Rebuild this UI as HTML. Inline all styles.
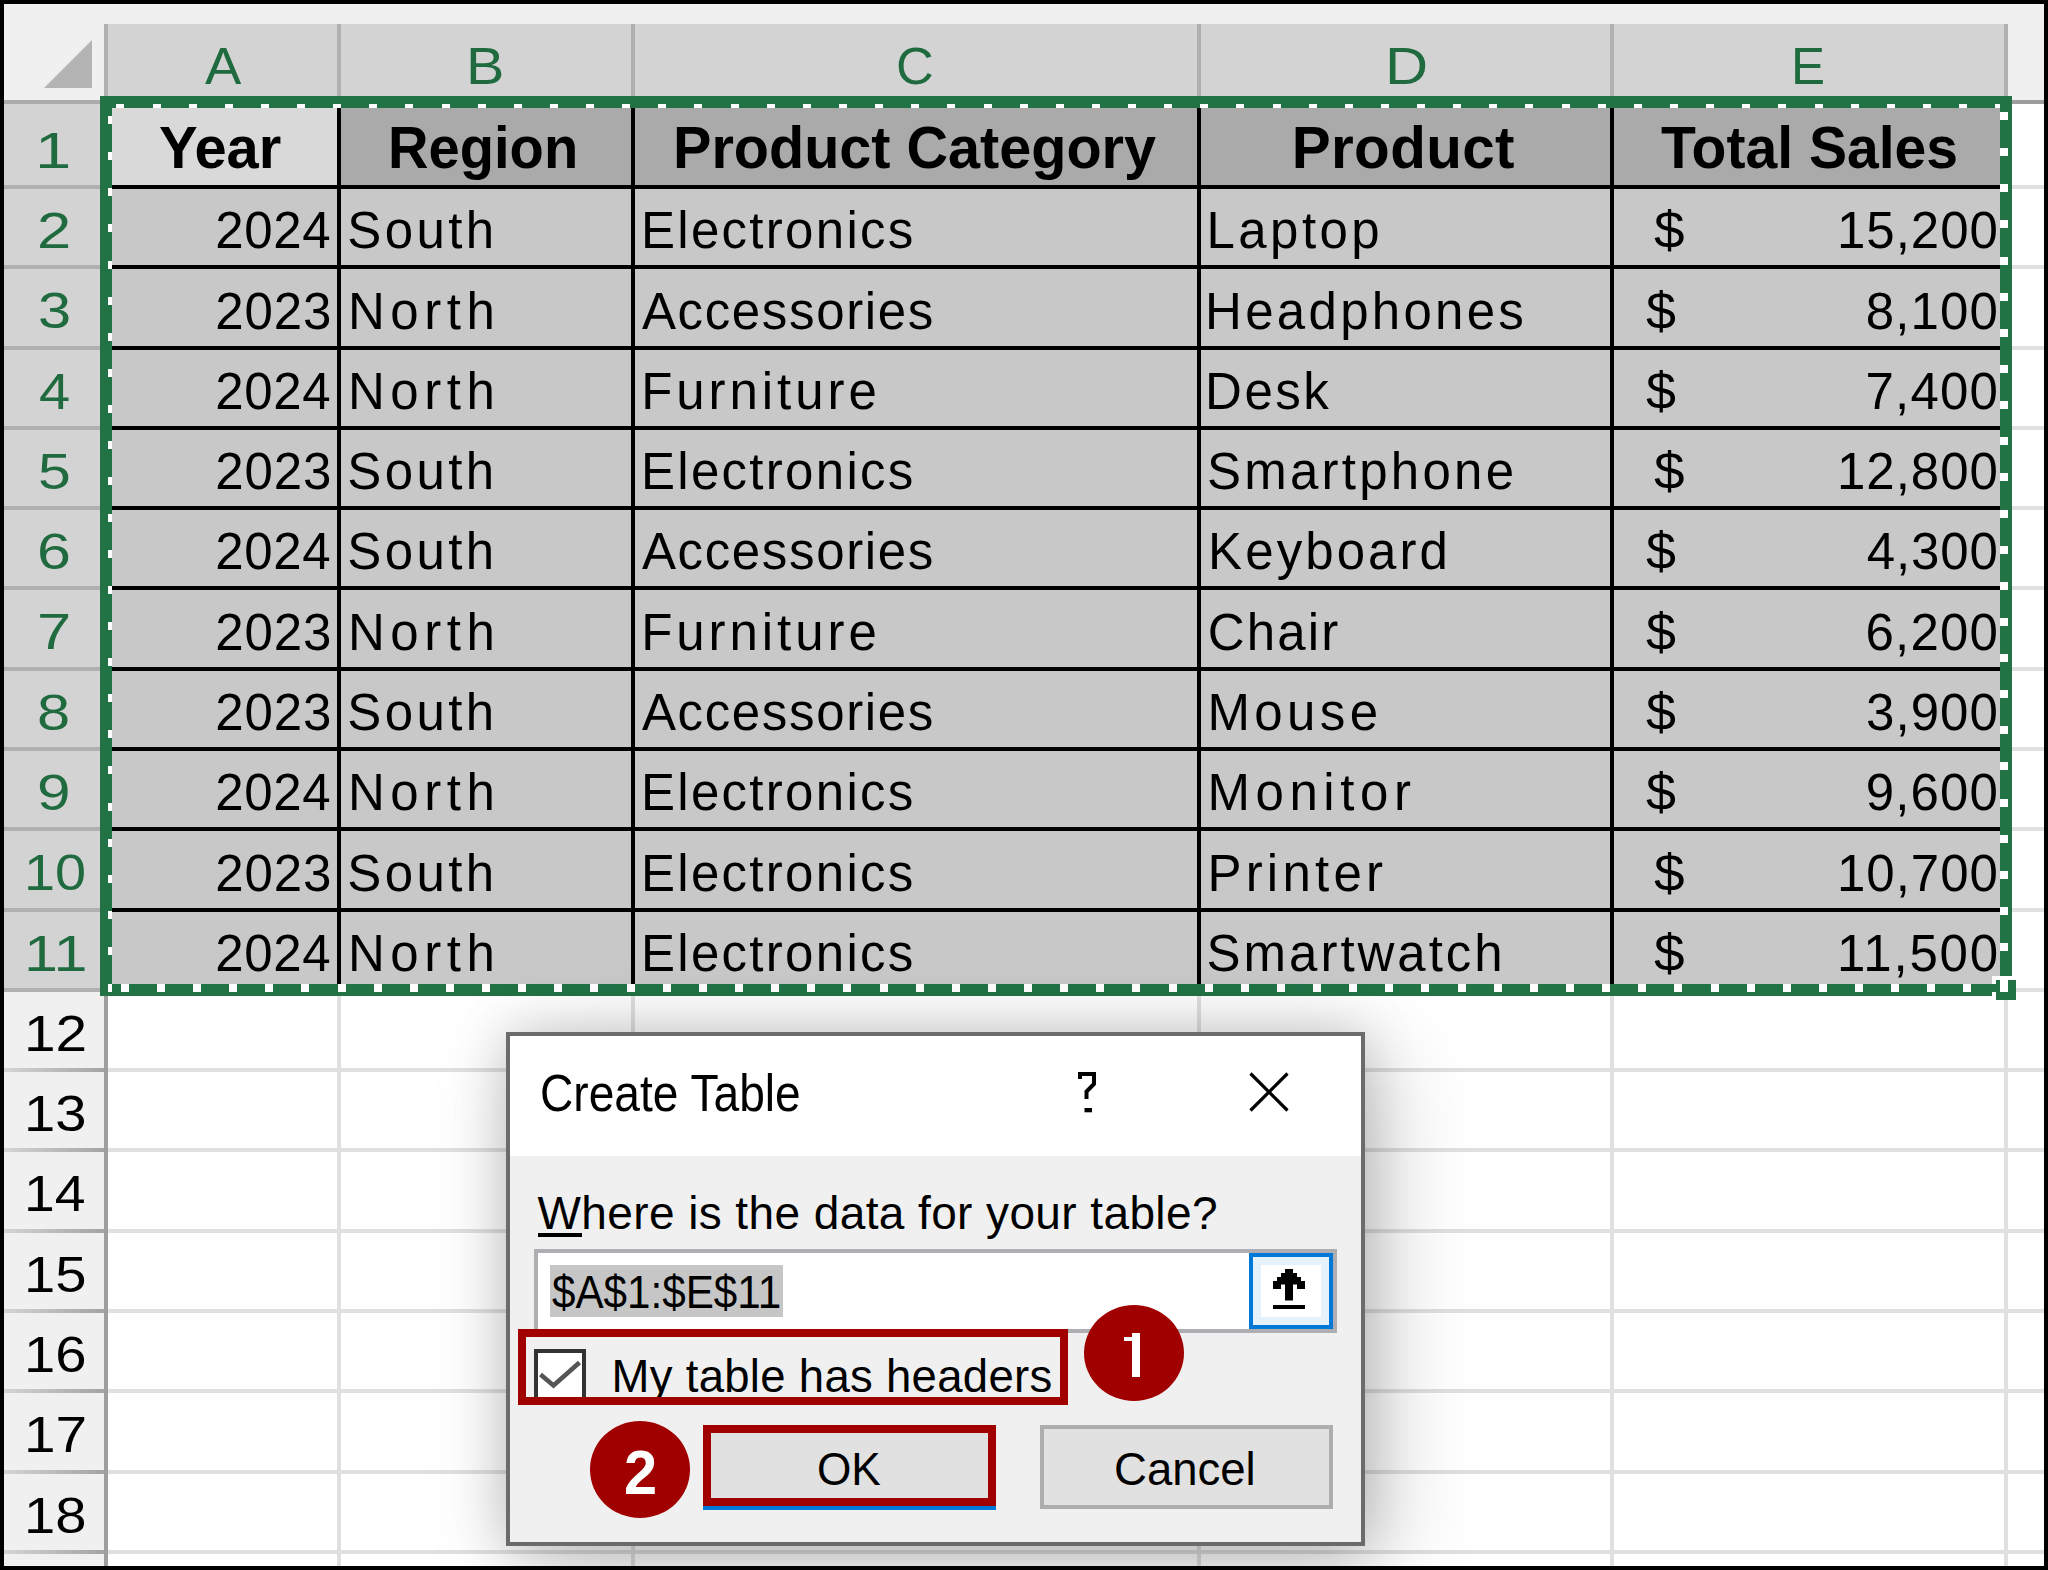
<!DOCTYPE html>
<html><head><meta charset="utf-8"><title>Create Table</title>
<style>
html,body{margin:0;padding:0;width:2048px;height:1570px;overflow:hidden;background:#000}
body>div,body>svg{position:absolute;box-sizing:border-box}
.t{white-space:pre;font-family:"Liberation Sans",sans-serif;transform-origin:0 0}
</style></head><body>
<div style="left:0.00px;top:0.00px;width:2048.00px;height:1570.00px;background:#000;"></div>
<div style="left:4.00px;top:4.00px;width:2040.00px;height:1562.00px;background:#ffffff;"></div>
<div style="left:4.00px;top:4.00px;width:2040.00px;height:96.00px;background:#f0f0f0;"></div>
<div style="left:104.00px;top:24.00px;width:1900.00px;height:76.00px;background:#d3d3d3;"></div>
<svg style="left:44px;top:40px;width:48px;height:48px" width="48" height="48"><polygon points="48,0 48,48 0,48" fill="#b4b4b4"/></svg>
<div style="left:104.00px;top:24.00px;width:4.00px;height:76.00px;background:#b0b0b0;"></div>
<div style="left:337.00px;top:24.00px;width:4.00px;height:76.00px;background:#b0b0b0;"></div>
<div style="left:630.50px;top:24.00px;width:4.00px;height:76.00px;background:#b0b0b0;"></div>
<div style="left:1197.00px;top:24.00px;width:4.00px;height:76.00px;background:#b0b0b0;"></div>
<div style="left:1610.00px;top:24.00px;width:4.00px;height:76.00px;background:#b0b0b0;"></div>
<div style="left:2004.00px;top:24.00px;width:4.00px;height:76.00px;background:#b0b0b0;"></div>
<div style="left:4.00px;top:100.00px;width:2040.00px;height:4.00px;background:#ababab;"></div>
<div style="left:2012.00px;top:100.00px;width:32.00px;height:4.00px;background:#9c9c9c;"></div>
<div style="left:4.00px;top:104.00px;width:100.00px;height:887.90px;background:#d3d3d3;"></div>
<div style="left:4.00px;top:991.90px;width:100.00px;height:574.10px;background:#f0f0f0;"></div>
<div style="left:104.00px;top:987.90px;width:4.00px;height:578.10px;background:#9e9e9e;"></div>
<div style="left:4.00px;top:185.00px;width:100.00px;height:4.00px;background:#b0b0b0;"></div>
<div style="left:4.00px;top:265.29px;width:100.00px;height:4.00px;background:#b0b0b0;"></div>
<div style="left:4.00px;top:345.58px;width:100.00px;height:4.00px;background:#b0b0b0;"></div>
<div style="left:4.00px;top:425.87px;width:100.00px;height:4.00px;background:#b0b0b0;"></div>
<div style="left:4.00px;top:506.16px;width:100.00px;height:4.00px;background:#b0b0b0;"></div>
<div style="left:4.00px;top:586.45px;width:100.00px;height:4.00px;background:#b0b0b0;"></div>
<div style="left:4.00px;top:666.74px;width:100.00px;height:4.00px;background:#b0b0b0;"></div>
<div style="left:4.00px;top:747.03px;width:100.00px;height:4.00px;background:#b0b0b0;"></div>
<div style="left:4.00px;top:827.32px;width:100.00px;height:4.00px;background:#b0b0b0;"></div>
<div style="left:4.00px;top:907.61px;width:100.00px;height:4.00px;background:#b0b0b0;"></div>
<div style="left:4.00px;top:987.90px;width:100.00px;height:4.00px;background:#b0b0b0;"></div>
<div style="left:4.00px;top:1068.19px;width:100.00px;height:4.00px;background:linear-gradient(90deg,#d4d4d4,#a4a4a4);"></div>
<div style="left:4.00px;top:1148.48px;width:100.00px;height:4.00px;background:linear-gradient(90deg,#d4d4d4,#a4a4a4);"></div>
<div style="left:4.00px;top:1228.77px;width:100.00px;height:4.00px;background:linear-gradient(90deg,#d4d4d4,#a4a4a4);"></div>
<div style="left:4.00px;top:1309.06px;width:100.00px;height:4.00px;background:linear-gradient(90deg,#d4d4d4,#a4a4a4);"></div>
<div style="left:4.00px;top:1389.35px;width:100.00px;height:4.00px;background:linear-gradient(90deg,#d4d4d4,#a4a4a4);"></div>
<div style="left:4.00px;top:1469.64px;width:100.00px;height:4.00px;background:linear-gradient(90deg,#d4d4d4,#a4a4a4);"></div>
<div style="left:4.00px;top:1549.93px;width:100.00px;height:4.00px;background:linear-gradient(90deg,#d4d4d4,#a4a4a4);"></div>
<div style="left:337.00px;top:104.00px;width:4.00px;height:1462.00px;background:#e0e0e0;"></div>
<div style="left:630.50px;top:104.00px;width:4.00px;height:1462.00px;background:#e0e0e0;"></div>
<div style="left:1197.00px;top:104.00px;width:4.00px;height:1462.00px;background:#e0e0e0;"></div>
<div style="left:1610.00px;top:104.00px;width:4.00px;height:1462.00px;background:#e0e0e0;"></div>
<div style="left:2004.00px;top:104.00px;width:4.00px;height:1462.00px;background:#e0e0e0;"></div>
<div style="left:108.00px;top:185.00px;width:1936.00px;height:4.00px;background:#e0e0e0;"></div>
<div style="left:108.00px;top:265.29px;width:1936.00px;height:4.00px;background:#e0e0e0;"></div>
<div style="left:108.00px;top:345.58px;width:1936.00px;height:4.00px;background:#e0e0e0;"></div>
<div style="left:108.00px;top:425.87px;width:1936.00px;height:4.00px;background:#e0e0e0;"></div>
<div style="left:108.00px;top:506.16px;width:1936.00px;height:4.00px;background:#e0e0e0;"></div>
<div style="left:108.00px;top:586.45px;width:1936.00px;height:4.00px;background:#e0e0e0;"></div>
<div style="left:108.00px;top:666.74px;width:1936.00px;height:4.00px;background:#e0e0e0;"></div>
<div style="left:108.00px;top:747.03px;width:1936.00px;height:4.00px;background:#e0e0e0;"></div>
<div style="left:108.00px;top:827.32px;width:1936.00px;height:4.00px;background:#e0e0e0;"></div>
<div style="left:108.00px;top:907.61px;width:1936.00px;height:4.00px;background:#e0e0e0;"></div>
<div style="left:108.00px;top:987.90px;width:1936.00px;height:4.00px;background:#e0e0e0;"></div>
<div style="left:108.00px;top:1068.19px;width:1936.00px;height:4.00px;background:#e0e0e0;"></div>
<div style="left:108.00px;top:1148.48px;width:1936.00px;height:4.00px;background:#e0e0e0;"></div>
<div style="left:108.00px;top:1228.77px;width:1936.00px;height:4.00px;background:#e0e0e0;"></div>
<div style="left:108.00px;top:1309.06px;width:1936.00px;height:4.00px;background:#e0e0e0;"></div>
<div style="left:108.00px;top:1389.35px;width:1936.00px;height:4.00px;background:#e0e0e0;"></div>
<div style="left:108.00px;top:1469.64px;width:1936.00px;height:4.00px;background:#e0e0e0;"></div>
<div style="left:108.00px;top:1549.93px;width:1936.00px;height:4.00px;background:#e0e0e0;"></div>
<div style="left:108.00px;top:104.00px;width:1896.00px;height:883.90px;background:#c8c8c8;"></div>
<div style="left:108.00px;top:104.00px;width:229.00px;height:81.00px;background:#d9d9d9;"></div>
<div style="left:341.00px;top:104.00px;width:1663.00px;height:81.00px;background:#aaaaaa;"></div>
<div style="left:337.00px;top:104.00px;width:4.00px;height:883.90px;background:#000;"></div>
<div style="left:630.50px;top:104.00px;width:4.00px;height:883.90px;background:#000;"></div>
<div style="left:1197.00px;top:104.00px;width:4.00px;height:883.90px;background:#000;"></div>
<div style="left:1610.00px;top:104.00px;width:4.00px;height:883.90px;background:#000;"></div>
<div style="left:108.00px;top:185.00px;width:1896.00px;height:4.00px;background:#000;"></div>
<div style="left:108.00px;top:265.29px;width:1896.00px;height:4.00px;background:#000;"></div>
<div style="left:108.00px;top:345.58px;width:1896.00px;height:4.00px;background:#000;"></div>
<div style="left:108.00px;top:425.87px;width:1896.00px;height:4.00px;background:#000;"></div>
<div style="left:108.00px;top:506.16px;width:1896.00px;height:4.00px;background:#000;"></div>
<div style="left:108.00px;top:586.45px;width:1896.00px;height:4.00px;background:#000;"></div>
<div style="left:108.00px;top:666.74px;width:1896.00px;height:4.00px;background:#000;"></div>
<div style="left:108.00px;top:747.03px;width:1896.00px;height:4.00px;background:#000;"></div>
<div style="left:108.00px;top:827.32px;width:1896.00px;height:4.00px;background:#000;"></div>
<div style="left:108.00px;top:907.61px;width:1896.00px;height:4.00px;background:#000;"></div>
<div style="left:100.00px;top:96.00px;width:1912.00px;height:12.00px;background:#217346;"></div>
<div style="left:100.00px;top:96.00px;width:12.00px;height:900.00px;background:#217346;"></div>
<div style="left:2000.00px;top:96.00px;width:12.00px;height:880.00px;background:#217346;"></div>
<div style="left:100.00px;top:984.00px;width:1892.00px;height:12.00px;background:#217346;"></div>
<div style="left:1992.00px;top:984.00px;width:4.00px;height:8.00px;background:#217346;"></div>
<div style="left:1992.00px;top:976.00px;width:8.00px;height:8.00px;background:#ffffff;"></div>
<div style="left:2000.00px;top:976.00px;width:12.00px;height:4.00px;background:#ffffff;"></div>
<div style="left:1996.00px;top:980.00px;width:20.00px;height:20.00px;background:#217346;"></div>
<div style="left:2000.00px;top:980.00px;width:8.00px;height:12.00px;background:#ffffff;"></div>
<div style="left:116.40px;top:104.00px;width:8.00px;height:4.00px;background:#ffffff;"></div>
<div style="left:152.53px;top:104.00px;width:8.00px;height:4.00px;background:#ffffff;"></div>
<div style="left:188.66px;top:104.00px;width:8.00px;height:4.00px;background:#ffffff;"></div>
<div style="left:224.79px;top:104.00px;width:8.00px;height:4.00px;background:#ffffff;"></div>
<div style="left:260.92px;top:104.00px;width:8.00px;height:4.00px;background:#ffffff;"></div>
<div style="left:297.05px;top:104.00px;width:8.00px;height:4.00px;background:#ffffff;"></div>
<div style="left:333.18px;top:104.00px;width:8.00px;height:4.00px;background:#ffffff;"></div>
<div style="left:369.31px;top:104.00px;width:8.00px;height:4.00px;background:#ffffff;"></div>
<div style="left:405.44px;top:104.00px;width:8.00px;height:4.00px;background:#ffffff;"></div>
<div style="left:441.57px;top:104.00px;width:8.00px;height:4.00px;background:#ffffff;"></div>
<div style="left:477.70px;top:104.00px;width:8.00px;height:4.00px;background:#ffffff;"></div>
<div style="left:513.83px;top:104.00px;width:8.00px;height:4.00px;background:#ffffff;"></div>
<div style="left:549.96px;top:104.00px;width:8.00px;height:4.00px;background:#ffffff;"></div>
<div style="left:586.09px;top:104.00px;width:8.00px;height:4.00px;background:#ffffff;"></div>
<div style="left:622.22px;top:104.00px;width:8.00px;height:4.00px;background:#ffffff;"></div>
<div style="left:658.35px;top:104.00px;width:8.00px;height:4.00px;background:#ffffff;"></div>
<div style="left:694.48px;top:104.00px;width:8.00px;height:4.00px;background:#ffffff;"></div>
<div style="left:730.61px;top:104.00px;width:8.00px;height:4.00px;background:#ffffff;"></div>
<div style="left:766.74px;top:104.00px;width:8.00px;height:4.00px;background:#ffffff;"></div>
<div style="left:802.87px;top:104.00px;width:8.00px;height:4.00px;background:#ffffff;"></div>
<div style="left:839.00px;top:104.00px;width:8.00px;height:4.00px;background:#ffffff;"></div>
<div style="left:875.13px;top:104.00px;width:8.00px;height:4.00px;background:#ffffff;"></div>
<div style="left:911.26px;top:104.00px;width:8.00px;height:4.00px;background:#ffffff;"></div>
<div style="left:947.39px;top:104.00px;width:8.00px;height:4.00px;background:#ffffff;"></div>
<div style="left:983.52px;top:104.00px;width:8.00px;height:4.00px;background:#ffffff;"></div>
<div style="left:1019.65px;top:104.00px;width:8.00px;height:4.00px;background:#ffffff;"></div>
<div style="left:1055.78px;top:104.00px;width:8.00px;height:4.00px;background:#ffffff;"></div>
<div style="left:1091.91px;top:104.00px;width:8.00px;height:4.00px;background:#ffffff;"></div>
<div style="left:1128.04px;top:104.00px;width:8.00px;height:4.00px;background:#ffffff;"></div>
<div style="left:1164.17px;top:104.00px;width:8.00px;height:4.00px;background:#ffffff;"></div>
<div style="left:1200.30px;top:104.00px;width:8.00px;height:4.00px;background:#ffffff;"></div>
<div style="left:1236.43px;top:104.00px;width:8.00px;height:4.00px;background:#ffffff;"></div>
<div style="left:1272.56px;top:104.00px;width:8.00px;height:4.00px;background:#ffffff;"></div>
<div style="left:1308.69px;top:104.00px;width:8.00px;height:4.00px;background:#ffffff;"></div>
<div style="left:1344.82px;top:104.00px;width:8.00px;height:4.00px;background:#ffffff;"></div>
<div style="left:1380.95px;top:104.00px;width:8.00px;height:4.00px;background:#ffffff;"></div>
<div style="left:1417.08px;top:104.00px;width:8.00px;height:4.00px;background:#ffffff;"></div>
<div style="left:1453.21px;top:104.00px;width:8.00px;height:4.00px;background:#ffffff;"></div>
<div style="left:1489.34px;top:104.00px;width:8.00px;height:4.00px;background:#ffffff;"></div>
<div style="left:1525.47px;top:104.00px;width:8.00px;height:4.00px;background:#ffffff;"></div>
<div style="left:1561.60px;top:104.00px;width:8.00px;height:4.00px;background:#ffffff;"></div>
<div style="left:1597.73px;top:104.00px;width:8.00px;height:4.00px;background:#ffffff;"></div>
<div style="left:1633.86px;top:104.00px;width:8.00px;height:4.00px;background:#ffffff;"></div>
<div style="left:1669.99px;top:104.00px;width:8.00px;height:4.00px;background:#ffffff;"></div>
<div style="left:1706.12px;top:104.00px;width:8.00px;height:4.00px;background:#ffffff;"></div>
<div style="left:1742.25px;top:104.00px;width:8.00px;height:4.00px;background:#ffffff;"></div>
<div style="left:1778.38px;top:104.00px;width:8.00px;height:4.00px;background:#ffffff;"></div>
<div style="left:1814.51px;top:104.00px;width:8.00px;height:4.00px;background:#ffffff;"></div>
<div style="left:1850.64px;top:104.00px;width:8.00px;height:4.00px;background:#ffffff;"></div>
<div style="left:1886.77px;top:104.00px;width:8.00px;height:4.00px;background:#ffffff;"></div>
<div style="left:1922.90px;top:104.00px;width:8.00px;height:4.00px;background:#ffffff;"></div>
<div style="left:1959.03px;top:104.00px;width:8.00px;height:4.00px;background:#ffffff;"></div>
<div style="left:1995.16px;top:104.00px;width:4.84px;height:4.00px;background:#ffffff;"></div>
<div style="left:1996.00px;top:104.00px;width:4.00px;height:4.00px;background:#ffffff;"></div>
<div style="left:108.00px;top:116.10px;width:4.00px;height:8.00px;background:#ffffff;"></div>
<div style="left:108.00px;top:152.23px;width:4.00px;height:8.00px;background:#ffffff;"></div>
<div style="left:108.00px;top:188.36px;width:4.00px;height:8.00px;background:#ffffff;"></div>
<div style="left:108.00px;top:224.49px;width:4.00px;height:8.00px;background:#ffffff;"></div>
<div style="left:108.00px;top:260.62px;width:4.00px;height:8.00px;background:#ffffff;"></div>
<div style="left:108.00px;top:296.75px;width:4.00px;height:8.00px;background:#ffffff;"></div>
<div style="left:108.00px;top:332.88px;width:4.00px;height:8.00px;background:#ffffff;"></div>
<div style="left:108.00px;top:369.01px;width:4.00px;height:8.00px;background:#ffffff;"></div>
<div style="left:108.00px;top:405.14px;width:4.00px;height:8.00px;background:#ffffff;"></div>
<div style="left:108.00px;top:441.27px;width:4.00px;height:8.00px;background:#ffffff;"></div>
<div style="left:108.00px;top:477.40px;width:4.00px;height:8.00px;background:#ffffff;"></div>
<div style="left:108.00px;top:513.53px;width:4.00px;height:8.00px;background:#ffffff;"></div>
<div style="left:108.00px;top:549.66px;width:4.00px;height:8.00px;background:#ffffff;"></div>
<div style="left:108.00px;top:585.79px;width:4.00px;height:8.00px;background:#ffffff;"></div>
<div style="left:108.00px;top:621.92px;width:4.00px;height:8.00px;background:#ffffff;"></div>
<div style="left:108.00px;top:658.05px;width:4.00px;height:8.00px;background:#ffffff;"></div>
<div style="left:108.00px;top:694.18px;width:4.00px;height:8.00px;background:#ffffff;"></div>
<div style="left:108.00px;top:730.31px;width:4.00px;height:8.00px;background:#ffffff;"></div>
<div style="left:108.00px;top:766.44px;width:4.00px;height:8.00px;background:#ffffff;"></div>
<div style="left:108.00px;top:802.57px;width:4.00px;height:8.00px;background:#ffffff;"></div>
<div style="left:108.00px;top:838.70px;width:4.00px;height:8.00px;background:#ffffff;"></div>
<div style="left:108.00px;top:874.83px;width:4.00px;height:8.00px;background:#ffffff;"></div>
<div style="left:108.00px;top:910.96px;width:4.00px;height:8.00px;background:#ffffff;"></div>
<div style="left:108.00px;top:947.09px;width:4.00px;height:8.00px;background:#ffffff;"></div>
<div style="left:2000.00px;top:112.10px;width:8.00px;height:8.00px;background:#ffffff;"></div>
<div style="left:2000.00px;top:148.23px;width:8.00px;height:8.00px;background:#ffffff;"></div>
<div style="left:2000.00px;top:184.36px;width:8.00px;height:8.00px;background:#ffffff;"></div>
<div style="left:2000.00px;top:220.49px;width:8.00px;height:8.00px;background:#ffffff;"></div>
<div style="left:2000.00px;top:256.62px;width:8.00px;height:8.00px;background:#ffffff;"></div>
<div style="left:2000.00px;top:292.75px;width:8.00px;height:8.00px;background:#ffffff;"></div>
<div style="left:2000.00px;top:328.88px;width:8.00px;height:8.00px;background:#ffffff;"></div>
<div style="left:2000.00px;top:365.01px;width:8.00px;height:8.00px;background:#ffffff;"></div>
<div style="left:2000.00px;top:401.14px;width:8.00px;height:8.00px;background:#ffffff;"></div>
<div style="left:2000.00px;top:437.27px;width:8.00px;height:8.00px;background:#ffffff;"></div>
<div style="left:2000.00px;top:473.40px;width:8.00px;height:8.00px;background:#ffffff;"></div>
<div style="left:2000.00px;top:509.53px;width:8.00px;height:8.00px;background:#ffffff;"></div>
<div style="left:2000.00px;top:545.66px;width:8.00px;height:8.00px;background:#ffffff;"></div>
<div style="left:2000.00px;top:581.79px;width:8.00px;height:8.00px;background:#ffffff;"></div>
<div style="left:2000.00px;top:617.92px;width:8.00px;height:8.00px;background:#ffffff;"></div>
<div style="left:2000.00px;top:654.05px;width:8.00px;height:8.00px;background:#ffffff;"></div>
<div style="left:2000.00px;top:690.18px;width:8.00px;height:8.00px;background:#ffffff;"></div>
<div style="left:2000.00px;top:726.31px;width:8.00px;height:8.00px;background:#ffffff;"></div>
<div style="left:2000.00px;top:762.44px;width:8.00px;height:8.00px;background:#ffffff;"></div>
<div style="left:2000.00px;top:798.57px;width:8.00px;height:8.00px;background:#ffffff;"></div>
<div style="left:2000.00px;top:834.70px;width:8.00px;height:8.00px;background:#ffffff;"></div>
<div style="left:2000.00px;top:870.83px;width:8.00px;height:8.00px;background:#ffffff;"></div>
<div style="left:2000.00px;top:906.96px;width:8.00px;height:8.00px;background:#ffffff;"></div>
<div style="left:2000.00px;top:943.09px;width:8.00px;height:8.00px;background:#ffffff;"></div>
<div style="left:120.80px;top:984.00px;width:8.00px;height:8.00px;background:#ffffff;"></div>
<div style="left:156.93px;top:984.00px;width:8.00px;height:8.00px;background:#ffffff;"></div>
<div style="left:193.06px;top:984.00px;width:8.00px;height:8.00px;background:#ffffff;"></div>
<div style="left:229.19px;top:984.00px;width:8.00px;height:8.00px;background:#ffffff;"></div>
<div style="left:265.32px;top:984.00px;width:8.00px;height:8.00px;background:#ffffff;"></div>
<div style="left:301.45px;top:984.00px;width:8.00px;height:8.00px;background:#ffffff;"></div>
<div style="left:337.58px;top:984.00px;width:8.00px;height:8.00px;background:#ffffff;"></div>
<div style="left:373.71px;top:984.00px;width:8.00px;height:8.00px;background:#ffffff;"></div>
<div style="left:409.84px;top:984.00px;width:8.00px;height:8.00px;background:#ffffff;"></div>
<div style="left:445.97px;top:984.00px;width:8.00px;height:8.00px;background:#ffffff;"></div>
<div style="left:482.10px;top:984.00px;width:8.00px;height:8.00px;background:#ffffff;"></div>
<div style="left:518.23px;top:984.00px;width:8.00px;height:8.00px;background:#ffffff;"></div>
<div style="left:554.36px;top:984.00px;width:8.00px;height:8.00px;background:#ffffff;"></div>
<div style="left:590.49px;top:984.00px;width:8.00px;height:8.00px;background:#ffffff;"></div>
<div style="left:626.62px;top:984.00px;width:8.00px;height:8.00px;background:#ffffff;"></div>
<div style="left:662.75px;top:984.00px;width:8.00px;height:8.00px;background:#ffffff;"></div>
<div style="left:698.88px;top:984.00px;width:8.00px;height:8.00px;background:#ffffff;"></div>
<div style="left:735.01px;top:984.00px;width:8.00px;height:8.00px;background:#ffffff;"></div>
<div style="left:771.14px;top:984.00px;width:8.00px;height:8.00px;background:#ffffff;"></div>
<div style="left:807.27px;top:984.00px;width:8.00px;height:8.00px;background:#ffffff;"></div>
<div style="left:843.40px;top:984.00px;width:8.00px;height:8.00px;background:#ffffff;"></div>
<div style="left:879.53px;top:984.00px;width:8.00px;height:8.00px;background:#ffffff;"></div>
<div style="left:915.66px;top:984.00px;width:8.00px;height:8.00px;background:#ffffff;"></div>
<div style="left:951.79px;top:984.00px;width:8.00px;height:8.00px;background:#ffffff;"></div>
<div style="left:987.92px;top:984.00px;width:8.00px;height:8.00px;background:#ffffff;"></div>
<div style="left:1024.05px;top:984.00px;width:8.00px;height:8.00px;background:#ffffff;"></div>
<div style="left:1060.18px;top:984.00px;width:8.00px;height:8.00px;background:#ffffff;"></div>
<div style="left:1096.31px;top:984.00px;width:8.00px;height:8.00px;background:#ffffff;"></div>
<div style="left:1132.44px;top:984.00px;width:8.00px;height:8.00px;background:#ffffff;"></div>
<div style="left:1168.57px;top:984.00px;width:8.00px;height:8.00px;background:#ffffff;"></div>
<div style="left:1204.70px;top:984.00px;width:8.00px;height:8.00px;background:#ffffff;"></div>
<div style="left:1240.83px;top:984.00px;width:8.00px;height:8.00px;background:#ffffff;"></div>
<div style="left:1276.96px;top:984.00px;width:8.00px;height:8.00px;background:#ffffff;"></div>
<div style="left:1313.09px;top:984.00px;width:8.00px;height:8.00px;background:#ffffff;"></div>
<div style="left:1349.22px;top:984.00px;width:8.00px;height:8.00px;background:#ffffff;"></div>
<div style="left:1385.35px;top:984.00px;width:8.00px;height:8.00px;background:#ffffff;"></div>
<div style="left:1421.48px;top:984.00px;width:8.00px;height:8.00px;background:#ffffff;"></div>
<div style="left:1457.61px;top:984.00px;width:8.00px;height:8.00px;background:#ffffff;"></div>
<div style="left:1493.74px;top:984.00px;width:8.00px;height:8.00px;background:#ffffff;"></div>
<div style="left:1529.87px;top:984.00px;width:8.00px;height:8.00px;background:#ffffff;"></div>
<div style="left:1566.00px;top:984.00px;width:8.00px;height:8.00px;background:#ffffff;"></div>
<div style="left:1602.13px;top:984.00px;width:8.00px;height:8.00px;background:#ffffff;"></div>
<div style="left:1638.26px;top:984.00px;width:8.00px;height:8.00px;background:#ffffff;"></div>
<div style="left:1674.39px;top:984.00px;width:8.00px;height:8.00px;background:#ffffff;"></div>
<div style="left:1710.52px;top:984.00px;width:8.00px;height:8.00px;background:#ffffff;"></div>
<div style="left:1746.65px;top:984.00px;width:8.00px;height:8.00px;background:#ffffff;"></div>
<div style="left:1782.78px;top:984.00px;width:8.00px;height:8.00px;background:#ffffff;"></div>
<div style="left:1818.91px;top:984.00px;width:8.00px;height:8.00px;background:#ffffff;"></div>
<div style="left:1855.04px;top:984.00px;width:8.00px;height:8.00px;background:#ffffff;"></div>
<div style="left:1891.17px;top:984.00px;width:8.00px;height:8.00px;background:#ffffff;"></div>
<div style="left:1927.30px;top:984.00px;width:8.00px;height:8.00px;background:#ffffff;"></div>
<div style="left:1963.43px;top:984.00px;width:8.00px;height:8.00px;background:#ffffff;"></div>
<div style="left:108.00px;top:984.00px;width:4.00px;height:8.00px;background:#ffffff;"></div>
<div style="left:506px;top:1032px;width:858.5px;height:514px;box-shadow:0 0 50px 0 rgba(0,0,0,0.18), 18px 24px 90px 0 rgba(0,0,0,0.2)"></div>
<div style="left:506.00px;top:1032.00px;width:858.50px;height:514.00px;background:#6b6b6b;"></div>
<div style="left:510.00px;top:1036.00px;width:850.50px;height:506.00px;background:#f0f0f0;"></div>
<div style="left:510.00px;top:1036.00px;width:850.50px;height:120.00px;background:#ffffff;"></div>
<svg style="left:1070px;top:1066px;width:240px;height:52px" width="240" height="52" viewBox="0 0 240 52"><polyline points="10,13 10,8 24,8 24,18 20,22 16.5,25.5 16.5,33" fill="none" stroke="#000" stroke-width="4" stroke-linejoin="miter"/><rect x="14.5" y="42" width="7.5" height="4.3" fill="#000"/><path d="M180.5 7.5 L217.5 44.5 M217.5 7.5 L180.5 44.5" stroke="#000" stroke-width="3.2" fill="none"/></svg>
<div style="left:538.00px;top:1232.70px;width:44.00px;height:3.90px;background:#000;"></div>
<div style="left:534.00px;top:1249.00px;width:803.00px;height:83.60px;background:#aeaeb3;"></div>
<div style="left:538.00px;top:1253.00px;width:795.00px;height:75.70px;background:#ffffff;"></div>
<div style="left:549.80px;top:1265.00px;width:233.00px;height:51.70px;background:#c6c6c6;"></div>
<div style="left:1248.80px;top:1252.70px;width:84.20px;height:76.10px;background:#0078d7;"></div>
<div style="left:1252.80px;top:1256.70px;width:76.20px;height:68.10px;background:#e5f1fb;"></div>
<div style="left:1260.80px;top:1264.90px;width:60.10px;height:51.80px;background:#ffffff;"></div>
<svg style="left:1270px;top:1266px;width:40px;height:48px" width="40" height="48" viewBox="0 0 40 48"><polygon points="15,3 23,3 23,7 27,7 27,11 31,11 31,15 35,15 35,23 27,23 27,18.6 23,18.6 23,34.5 15,34.5 15,18.6 11,18.6 11,23 3,23 3,15 7,15 7,11 11,11 11,7 15,7" fill="#000"/><rect x="3" y="39" width="32" height="4" fill="#000"/></svg>
<div style="left:534.20px;top:1349.40px;width:51.80px;height:51.60px;background:#333333;"></div>
<div style="left:538.20px;top:1353.40px;width:43.80px;height:43.60px;background:#ffffff;"></div>
<svg style="left:534px;top:1349px;width:52px;height:52px" width="52" height="52" viewBox="0 0 52 52"><polyline points="6.5,25.5 19.5,36.5 45.5,13.5" fill="none" stroke="#555" stroke-width="4.6"/></svg>
<div style="left:1084.3px;top:1304.9px;width:100px;height:96px;border-radius:50%;background:#a00000"></div>
<div style="left:590.4px;top:1421.2px;width:100px;height:96.4px;border-radius:50%;background:#a00000"></div>
<div style="left:1132.1px;top:1333.1px;width:8.4px;height:43.9px;background:#fff"></div>
<div style="left:1124.1px;top:1336.7px;width:8.2px;height:4.4px;background:#fff"></div>
<div style="left:702.80px;top:1425.30px;width:293.20px;height:84.30px;background:#0078d7;"></div>
<div style="left:702.80px;top:1425.30px;width:293.20px;height:80.40px;background:#a00000;"></div>
<div style="left:710.80px;top:1433.30px;width:277.20px;height:64.40px;background:#e1e1e1;"></div>
<div style="left:1040.00px;top:1425.40px;width:293.20px;height:84.10px;background:#adadad;"></div>
<div style="left:1044.00px;top:1429.40px;width:285.20px;height:76.10px;background:#e1e1e1;"></div>
<div class="t" style="left:204.53px;top:39.84px;font-size:52.5px;line-height:52.5px;color:#1f6b3f;transform:scaleX(1.0361);">A</div>
<div class="t" style="left:465.89px;top:39.84px;font-size:52.5px;line-height:52.5px;color:#1f6b3f;transform:scaleX(1.0966);">B</div>
<div class="t" style="left:896.49px;top:39.84px;font-size:52.5px;line-height:52.5px;color:#1f6b3f;transform:scaleX(0.9947);">C</div>
<div class="t" style="left:1385.23px;top:39.84px;font-size:52.5px;line-height:52.5px;color:#1f6b3f;transform:scaleX(1.1365);">D</div>
<div class="t" style="left:1791.12px;top:39.84px;font-size:52.5px;line-height:52.5px;color:#1f6b3f;transform:scaleX(0.9716);">E</div>
<div class="t" style="left:35.22px;top:125.64px;font-size:50.6px;line-height:50.6px;color:#1f6b3f;transform:scaleX(1.2869);">1</div>
<div class="t" style="left:37.02px;top:205.93px;font-size:50.6px;line-height:50.6px;color:#1f6b3f;transform:scaleX(1.2162);">2</div>
<div class="t" style="left:37.72px;top:286.22px;font-size:50.6px;line-height:50.6px;color:#1f6b3f;transform:scaleX(1.1774);">3</div>
<div class="t" style="left:38.70px;top:366.51px;font-size:50.6px;line-height:50.6px;color:#1f6b3f;transform:scaleX(1.1067);">4</div>
<div class="t" style="left:37.74px;top:446.80px;font-size:50.6px;line-height:50.6px;color:#1f6b3f;transform:scaleX(1.1650);">5</div>
<div class="t" style="left:37.06px;top:527.09px;font-size:50.6px;line-height:50.6px;color:#1f6b3f;transform:scaleX(1.2030);">6</div>
<div class="t" style="left:37.02px;top:607.38px;font-size:50.6px;line-height:50.6px;color:#1f6b3f;transform:scaleX(1.2162);">7</div>
<div class="t" style="left:37.42px;top:687.67px;font-size:50.6px;line-height:50.6px;color:#1f6b3f;transform:scaleX(1.1774);">8</div>
<div class="t" style="left:37.39px;top:767.96px;font-size:50.6px;line-height:50.6px;color:#1f6b3f;transform:scaleX(1.1900);">9</div>
<div class="t" style="left:24.01px;top:848.25px;font-size:50.6px;line-height:50.6px;color:#1f6b3f;transform:scaleX(1.1047);">10</div>
<div class="t" style="left:23.62px;top:928.54px;font-size:50.6px;line-height:50.6px;color:#1f6b3f;transform:scaleX(1.2074);">11</div>
<div class="t" style="left:23.94px;top:1008.83px;font-size:50.6px;line-height:50.6px;color:#000;transform:scaleX(1.1216);">12</div>
<div class="t" style="left:23.99px;top:1089.12px;font-size:50.6px;line-height:50.6px;color:#000;transform:scaleX(1.1103);">13</div>
<div class="t" style="left:24.05px;top:1169.41px;font-size:50.6px;line-height:50.6px;color:#000;transform:scaleX(1.0938);">14</div>
<div class="t" style="left:23.99px;top:1249.70px;font-size:50.6px;line-height:50.6px;color:#000;transform:scaleX(1.1103);">15</div>
<div class="t" style="left:23.99px;top:1329.99px;font-size:50.6px;line-height:50.6px;color:#000;transform:scaleX(1.1103);">16</div>
<div class="t" style="left:23.94px;top:1410.28px;font-size:50.6px;line-height:50.6px;color:#000;transform:scaleX(1.1216);">17</div>
<div class="t" style="left:23.99px;top:1490.57px;font-size:50.6px;line-height:50.6px;color:#000;transform:scaleX(1.1103);">18</div>
<div class="t" style="left:159.14px;top:118.95px;font-size:58.4px;line-height:58.4px;color:#000;font-weight:700;transform:scaleX(0.9912);">Year</div>
<div class="t" style="left:388.35px;top:118.95px;font-size:58.4px;line-height:58.4px;color:#000;font-weight:700;transform:scaleX(0.9612);">Region</div>
<div class="t" style="left:673.36px;top:118.95px;font-size:58.4px;line-height:58.4px;color:#000;font-weight:700;transform:scaleX(0.9860);">Product Category</div>
<div class="t" style="left:1291.70px;top:118.95px;font-size:58.4px;line-height:58.4px;color:#000;font-weight:700;letter-spacing:0.370px;">Product</div>
<div class="t" style="left:1660.73px;top:118.95px;font-size:58.4px;line-height:58.4px;color:#000;font-weight:700;transform:scaleX(0.9772);">Total Sales</div>
<div class="t" style="left:215.35px;top:205.31px;font-size:51px;line-height:51px;color:#000;letter-spacing:0.602px;">2024</div>
<div class="t" style="left:347.20px;top:205.31px;font-size:51px;line-height:51px;color:#000;letter-spacing:3.436px;">South</div>
<div class="t" style="left:641.02px;top:205.31px;font-size:51px;line-height:51px;color:#000;letter-spacing:2.287px;">Electronics</div>
<div class="t" style="left:1206.42px;top:205.31px;font-size:51px;line-height:51px;color:#000;letter-spacing:3.463px;">Laptop</div>
<div class="t" style="left:1654.15px;top:205.31px;font-size:51px;line-height:51px;color:#000;transform:scaleX(1.0766);">$</div>
<div class="t" style="left:1836.97px;top:205.31px;font-size:51px;line-height:51px;color:#000;letter-spacing:1.001px;">15,200</div>
<div class="t" style="left:215.35px;top:285.60px;font-size:51px;line-height:51px;color:#000;letter-spacing:0.857px;">2023</div>
<div class="t" style="left:348.02px;top:285.60px;font-size:51px;line-height:51px;color:#000;letter-spacing:5.525px;">North</div>
<div class="t" style="left:641.95px;top:285.60px;font-size:51px;line-height:51px;color:#000;letter-spacing:1.635px;">Accessories</div>
<div class="t" style="left:1205.12px;top:285.60px;font-size:51px;line-height:51px;color:#000;letter-spacing:3.277px;">Headphones</div>
<div class="t" style="left:1646.26px;top:285.60px;font-size:51px;line-height:51px;color:#000;transform:scaleX(1.0544);">$</div>
<div class="t" style="left:1865.70px;top:285.60px;font-size:51px;line-height:51px;color:#000;letter-spacing:1.145px;">8,100</div>
<div class="t" style="left:215.35px;top:365.88px;font-size:51px;line-height:51px;color:#000;letter-spacing:0.602px;">2024</div>
<div class="t" style="left:348.02px;top:365.88px;font-size:51px;line-height:51px;color:#000;letter-spacing:5.525px;">North</div>
<div class="t" style="left:641.22px;top:365.88px;font-size:51px;line-height:51px;color:#000;letter-spacing:3.934px;">Furniture</div>
<div class="t" style="left:1205.12px;top:365.88px;font-size:51px;line-height:51px;color:#000;letter-spacing:2.467px;">Desk</div>
<div class="t" style="left:1646.26px;top:365.88px;font-size:51px;line-height:51px;color:#000;transform:scaleX(1.0544);">$</div>
<div class="t" style="left:1865.45px;top:365.88px;font-size:51px;line-height:51px;color:#000;letter-spacing:1.209px;">7,400</div>
<div class="t" style="left:215.35px;top:446.17px;font-size:51px;line-height:51px;color:#000;letter-spacing:0.857px;">2023</div>
<div class="t" style="left:347.20px;top:446.17px;font-size:51px;line-height:51px;color:#000;letter-spacing:3.436px;">South</div>
<div class="t" style="left:641.02px;top:446.17px;font-size:51px;line-height:51px;color:#000;letter-spacing:2.287px;">Electronics</div>
<div class="t" style="left:1206.90px;top:446.17px;font-size:51px;line-height:51px;color:#000;letter-spacing:3.260px;">Smartphone</div>
<div class="t" style="left:1654.15px;top:446.17px;font-size:51px;line-height:51px;color:#000;transform:scaleX(1.0766);">$</div>
<div class="t" style="left:1836.97px;top:446.17px;font-size:51px;line-height:51px;color:#000;letter-spacing:1.001px;">12,800</div>
<div class="t" style="left:215.35px;top:526.47px;font-size:51px;line-height:51px;color:#000;letter-spacing:0.602px;">2024</div>
<div class="t" style="left:347.20px;top:526.47px;font-size:51px;line-height:51px;color:#000;letter-spacing:3.436px;">South</div>
<div class="t" style="left:641.95px;top:526.47px;font-size:51px;line-height:51px;color:#000;letter-spacing:1.635px;">Accessories</div>
<div class="t" style="left:1208.12px;top:526.47px;font-size:51px;line-height:51px;color:#000;letter-spacing:3.074px;">Keyboard</div>
<div class="t" style="left:1646.26px;top:526.47px;font-size:51px;line-height:51px;color:#000;transform:scaleX(1.0544);">$</div>
<div class="t" style="left:1866.72px;top:526.47px;font-size:51px;line-height:51px;color:#000;letter-spacing:0.890px;">4,300</div>
<div class="t" style="left:215.35px;top:606.75px;font-size:51px;line-height:51px;color:#000;letter-spacing:0.857px;">2023</div>
<div class="t" style="left:348.02px;top:606.75px;font-size:51px;line-height:51px;color:#000;letter-spacing:5.525px;">North</div>
<div class="t" style="left:641.22px;top:606.75px;font-size:51px;line-height:51px;color:#000;letter-spacing:3.934px;">Furniture</div>
<div class="t" style="left:1207.65px;top:606.75px;font-size:51px;line-height:51px;color:#000;letter-spacing:2.206px;">Chair</div>
<div class="t" style="left:1646.26px;top:606.75px;font-size:51px;line-height:51px;color:#000;transform:scaleX(1.0544);">$</div>
<div class="t" style="left:1865.45px;top:606.75px;font-size:51px;line-height:51px;color:#000;letter-spacing:1.209px;">6,200</div>
<div class="t" style="left:215.35px;top:687.04px;font-size:51px;line-height:51px;color:#000;letter-spacing:0.857px;">2023</div>
<div class="t" style="left:347.20px;top:687.04px;font-size:51px;line-height:51px;color:#000;letter-spacing:3.436px;">South</div>
<div class="t" style="left:641.95px;top:687.04px;font-size:51px;line-height:51px;color:#000;letter-spacing:1.635px;">Accessories</div>
<div class="t" style="left:1207.42px;top:687.04px;font-size:51px;line-height:51px;color:#000;letter-spacing:4.419px;">Mouse</div>
<div class="t" style="left:1646.26px;top:687.04px;font-size:51px;line-height:51px;color:#000;transform:scaleX(1.0544);">$</div>
<div class="t" style="left:1865.96px;top:687.04px;font-size:51px;line-height:51px;color:#000;letter-spacing:1.081px;">3,900</div>
<div class="t" style="left:215.35px;top:767.34px;font-size:51px;line-height:51px;color:#000;letter-spacing:0.602px;">2024</div>
<div class="t" style="left:348.02px;top:767.34px;font-size:51px;line-height:51px;color:#000;letter-spacing:5.525px;">North</div>
<div class="t" style="left:641.02px;top:767.34px;font-size:51px;line-height:51px;color:#000;letter-spacing:2.287px;">Electronics</div>
<div class="t" style="left:1207.42px;top:767.34px;font-size:51px;line-height:51px;color:#000;letter-spacing:5.577px;">Monitor</div>
<div class="t" style="left:1646.26px;top:767.34px;font-size:51px;line-height:51px;color:#000;transform:scaleX(1.0544);">$</div>
<div class="t" style="left:1865.70px;top:767.34px;font-size:51px;line-height:51px;color:#000;letter-spacing:1.145px;">9,600</div>
<div class="t" style="left:215.35px;top:847.62px;font-size:51px;line-height:51px;color:#000;letter-spacing:0.857px;">2023</div>
<div class="t" style="left:347.20px;top:847.62px;font-size:51px;line-height:51px;color:#000;letter-spacing:3.436px;">South</div>
<div class="t" style="left:641.02px;top:847.62px;font-size:51px;line-height:51px;color:#000;letter-spacing:2.287px;">Electronics</div>
<div class="t" style="left:1207.42px;top:847.62px;font-size:51px;line-height:51px;color:#000;letter-spacing:4.225px;">Printer</div>
<div class="t" style="left:1654.15px;top:847.62px;font-size:51px;line-height:51px;color:#000;transform:scaleX(1.0766);">$</div>
<div class="t" style="left:1836.97px;top:847.62px;font-size:51px;line-height:51px;color:#000;letter-spacing:1.001px;">10,700</div>
<div class="t" style="left:215.35px;top:927.91px;font-size:51px;line-height:51px;color:#000;letter-spacing:0.602px;">2024</div>
<div class="t" style="left:348.02px;top:927.91px;font-size:51px;line-height:51px;color:#000;letter-spacing:5.525px;">North</div>
<div class="t" style="left:641.02px;top:927.91px;font-size:51px;line-height:51px;color:#000;letter-spacing:2.287px;">Electronics</div>
<div class="t" style="left:1206.61px;top:927.91px;font-size:51px;line-height:51px;color:#000;letter-spacing:2.981px;">Smartwatch</div>
<div class="t" style="left:1654.15px;top:927.91px;font-size:51px;line-height:51px;color:#000;transform:scaleX(1.0766);">$</div>
<div class="t" style="left:1836.97px;top:927.91px;font-size:51px;line-height:51px;color:#000;letter-spacing:1.766px;">11,500</div>
<div class="t" style="left:539.99px;top:1067.44px;font-size:52.5px;line-height:52.5px;color:#000;transform:scaleX(0.8787);">Create Table</div>
<div class="t" style="left:537.57px;top:1189.63px;font-size:46px;line-height:46px;color:#000;letter-spacing:0.394px;">Where is the data for your table?</div>
<div class="t" style="left:552.28px;top:1269.44px;font-size:46.7px;line-height:46.7px;color:#000;transform:scaleX(0.9036);">$A$1:$E$11</div>
<div class="t" style="left:611.56px;top:1354.15px;font-size:45.5px;line-height:45.5px;color:#000;letter-spacing:0.297px;">My table has headers</div>
<div class="t" style="left:817.21px;top:1446.09px;font-size:46.4px;line-height:46.4px;color:#000;transform:scaleX(0.9523);">OK</div>
<div class="t" style="left:1114.22px;top:1446.19px;font-size:46.4px;line-height:46.4px;color:#000;transform:scaleX(0.9815);">Cancel</div>
<div class="t" style="left:624.21px;top:1441.09px;font-size:62.5px;line-height:62.5px;color:#fff;font-weight:700;transform:scaleX(0.9533);">2</div>
<div style="left:518px;top:1328.8px;width:550px;height:76.4px;box-sizing:border-box;border:8px solid #a00000"></div>
</body></html>
